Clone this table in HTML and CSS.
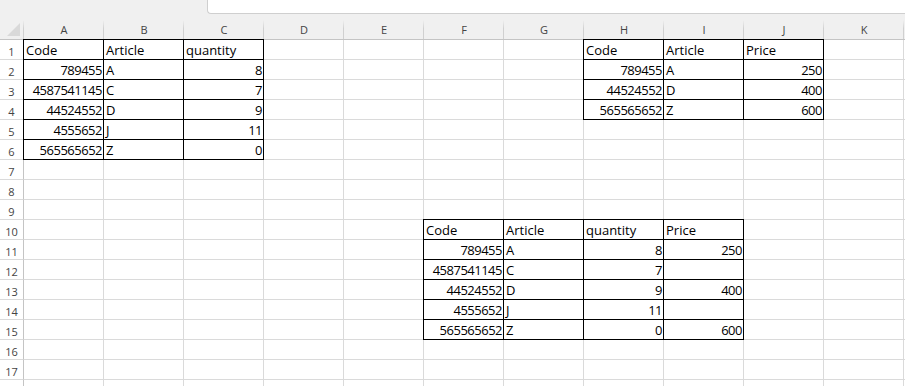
FILE: index.html
```html
<!DOCTYPE html>
<html lang="en">
<head>
<meta charset="utf-8">
<title>Sheet</title>
<link rel="stylesheet" href="styles.css">
</head>
<body>
<div class="sheet">
  <div class="topbar">
    <div class="namearea"></div>
    <div class="formula"></div>
  </div>
  <div class="grid">
    <div class="corner"><svg class="tri" width="24" height="25" viewBox="0 0 24 25"><polygon points="20,9 20,22 7,22" fill="#d9d9d9"/></svg></div>
    <div class="ch">A</div><div class="ch">B</div><div class="ch">C</div><div class="ch">D</div><div class="ch">E</div><div class="ch">F</div><div class="ch">G</div><div class="ch">H</div><div class="ch">I</div><div class="ch">J</div><div class="ch">K</div><div class="ch fill"></div>

    <div class="rh">1</div>
    <div class="c t">Code</div><div class="c t">Article</div><div class="c t">quantity</div>
    <div class="c"></div><div class="c"></div><div class="c"></div><div class="c"></div>
    <div class="c t">Code</div><div class="c t">Article</div><div class="c t">Price</div>
    <div class="c"></div><div class="c"></div>

    <div class="rh">2</div>
    <div class="c t n">789455</div><div class="c t">A</div><div class="c t n">8</div>
    <div class="c"></div><div class="c"></div><div class="c"></div><div class="c"></div>
    <div class="c t n">789455</div><div class="c t">A</div><div class="c t n">250</div>
    <div class="c"></div><div class="c"></div>

    <div class="rh">3</div>
    <div class="c t n">4587541145</div><div class="c t">C</div><div class="c t n">7</div>
    <div class="c"></div><div class="c"></div><div class="c"></div><div class="c"></div>
    <div class="c t n">44524552</div><div class="c t">D</div><div class="c t n">400</div>
    <div class="c"></div><div class="c"></div>

    <div class="rh">4</div>
    <div class="c t n">44524552</div><div class="c t">D</div><div class="c t n">9</div>
    <div class="c"></div><div class="c"></div><div class="c"></div><div class="c"></div>
    <div class="c t n">565565652</div><div class="c t">Z</div><div class="c t n">600</div>
    <div class="c"></div><div class="c"></div>

    <div class="rh">5</div>
    <div class="c t n">4555652</div><div class="c t">J</div><div class="c t n">11</div>
    <div class="c"></div><div class="c"></div><div class="c"></div><div class="c"></div>
    <div class="c"></div><div class="c"></div><div class="c"></div>
    <div class="c"></div><div class="c"></div>

    <div class="rh">6</div>
    <div class="c t n">565565652</div><div class="c t">Z</div><div class="c t n">0</div>
    <div class="c"></div><div class="c"></div><div class="c"></div><div class="c"></div>
    <div class="c"></div><div class="c"></div><div class="c"></div>
    <div class="c"></div><div class="c"></div>

    <div class="rh">7</div>
    <div class="c"></div><div class="c"></div><div class="c"></div><div class="c"></div><div class="c"></div><div class="c"></div><div class="c"></div><div class="c"></div><div class="c"></div><div class="c"></div><div class="c"></div><div class="c"></div>

    <div class="rh">8</div>
    <div class="c"></div><div class="c"></div><div class="c"></div><div class="c"></div><div class="c"></div><div class="c"></div><div class="c"></div><div class="c"></div><div class="c"></div><div class="c"></div><div class="c"></div><div class="c"></div>

    <div class="rh">9</div>
    <div class="c"></div><div class="c"></div><div class="c"></div><div class="c"></div><div class="c"></div><div class="c"></div><div class="c"></div><div class="c"></div><div class="c"></div><div class="c"></div><div class="c"></div><div class="c"></div>

    <div class="rh">10</div>
    <div class="c"></div><div class="c"></div><div class="c"></div><div class="c"></div><div class="c"></div>
    <div class="c t">Code</div><div class="c t">Article</div><div class="c t">quantity</div><div class="c t">Price</div>
    <div class="c"></div><div class="c"></div><div class="c"></div>

    <div class="rh">11</div>
    <div class="c"></div><div class="c"></div><div class="c"></div><div class="c"></div><div class="c"></div>
    <div class="c t n">789455</div><div class="c t">A</div><div class="c t n">8</div><div class="c t n">250</div>
    <div class="c"></div><div class="c"></div><div class="c"></div>

    <div class="rh">12</div>
    <div class="c"></div><div class="c"></div><div class="c"></div><div class="c"></div><div class="c"></div>
    <div class="c t n">4587541145</div><div class="c t">C</div><div class="c t n">7</div><div class="c t n"></div>
    <div class="c"></div><div class="c"></div><div class="c"></div>

    <div class="rh">13</div>
    <div class="c"></div><div class="c"></div><div class="c"></div><div class="c"></div><div class="c"></div>
    <div class="c t n">44524552</div><div class="c t">D</div><div class="c t n">9</div><div class="c t n">400</div>
    <div class="c"></div><div class="c"></div><div class="c"></div>

    <div class="rh">14</div>
    <div class="c"></div><div class="c"></div><div class="c"></div><div class="c"></div><div class="c"></div>
    <div class="c t n">4555652</div><div class="c t">J</div><div class="c t n">11</div><div class="c t n"></div>
    <div class="c"></div><div class="c"></div><div class="c"></div>

    <div class="rh">15</div>
    <div class="c"></div><div class="c"></div><div class="c"></div><div class="c"></div><div class="c"></div>
    <div class="c t n">565565652</div><div class="c t">Z</div><div class="c t n">0</div><div class="c t n">600</div>
    <div class="c"></div><div class="c"></div><div class="c"></div>

    <div class="rh">16</div>
    <div class="c"></div><div class="c"></div><div class="c"></div><div class="c"></div><div class="c"></div><div class="c"></div><div class="c"></div><div class="c"></div><div class="c"></div><div class="c"></div><div class="c"></div><div class="c"></div>

    <div class="rh">17</div>
    <div class="c"></div><div class="c"></div><div class="c"></div><div class="c"></div><div class="c"></div><div class="c"></div><div class="c"></div><div class="c"></div><div class="c"></div><div class="c"></div><div class="c"></div><div class="c"></div>

    <div class="rh"></div>
    <div class="c"></div><div class="c"></div><div class="c"></div><div class="c"></div><div class="c"></div><div class="c"></div><div class="c"></div><div class="c"></div><div class="c"></div><div class="c"></div><div class="c"></div><div class="c"></div>
  </div>
</div>
</body>
</html>
```
FILE: styles.css
```css
html, body {
  margin: 0;
  padding: 0;
  overflow: hidden;
  background: #ffffff;
}

.sheet {
  width: 905px;
  height: 386px;
  overflow: hidden;
  font-family: "Open Sans", "Noto Sans", sans-serif;
}

.topbar {
  display: flex;
  height: 14px;
  background: #f0f0f0;
}

.namearea {
  width: 207px;
  flex: none;
}

.formula {
  flex: 1;
  box-sizing: border-box;
  background: #ffffff;
  border-left: 1px solid #cfcfcf;
  border-bottom: 1px solid #cfcfcf;
  border-bottom-left-radius: 4px;
}

.grid {
  display: grid;
  grid-template-columns: 24px repeat(11, 80px) 1fr;
  grid-template-rows: 26px;
  grid-auto-rows: 20px;
  background: #ffffff;
}

.corner,
.ch {
  box-sizing: border-box;
  border-bottom: 1px solid #c4c4c4;
  background: linear-gradient(to bottom, rgba(208, 208, 208, 0), #d0d0d0 45%) right bottom / 1px 19px no-repeat, #f0f0f0;
}

.tri {
  display: block;
}

.ch {
  padding-top: 7px;
  line-height: 18px;
  font-size: 11px;
  color: #444444;
  text-align: center;
}

.ch.fill {
  background: #f0f0f0;
}

.rh {
  box-sizing: border-box;
  border-right: 1px solid #c4c4c4;
  border-bottom: 1px solid #dadada;
  padding-top: 4px;
  line-height: 15px;
  font-size: 11px;
  color: #444444;
  text-align: center;
}

.c {
  box-sizing: border-box;
  border-right: 1px solid #dadada;
  border-bottom: 1px solid #dadada;
  padding: 2px 2px 0 2px;
  line-height: 17px;
  font-size: 13px;
  color: #000000;
  white-space: nowrap;
  overflow: hidden;
}

.c.t {
  border-right-color: #000000;
  border-bottom-color: #000000;
  box-shadow: -1px -1px 0 #000000, -1px 0 0 #000000, 0 -1px 0 #000000;
}

.c.n {
  text-align: right;
  padding-right: 1px;
  letter-spacing: -0.5px;
}
```
